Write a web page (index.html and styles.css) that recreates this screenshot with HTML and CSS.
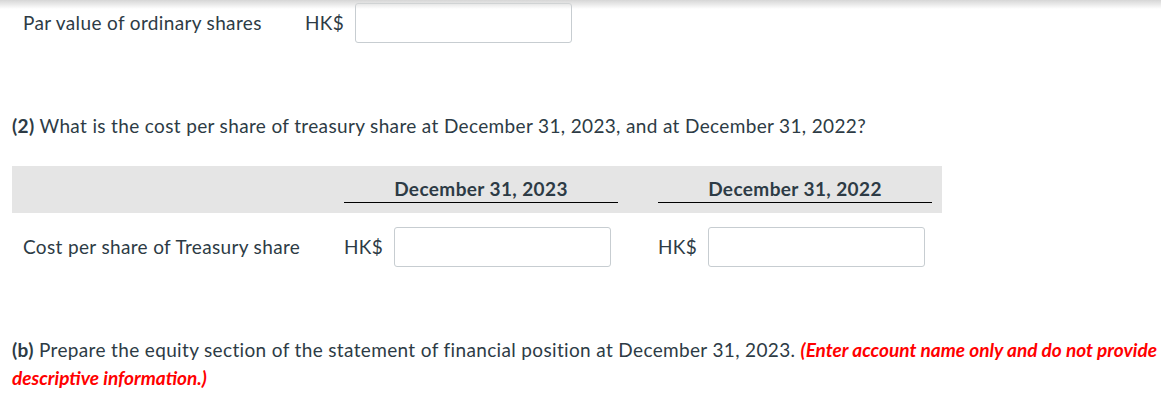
FILE: index.html
```html
<!DOCTYPE html>
<html>
<head>
  <title>Equity - Treasury shares</title>
  <meta charset="utf-8" />
  <link rel="stylesheet" href="styles.css">
</head>
<body>
<div class="shade"></div>
<div class="par-row">
  <span class="par-label">Par value of ordinary shares</span>
  <span class="cur">HK$</span>
  <input type="text" class="amount" />
</div>

<p class="question"><b>(2)</b> What is the cost per share of treasury share at December 31, 2023, and at December 31, 2022?</p>

<div class="cost-table">
  <div class="band">
    <div></div>
    <div class="col-head">December 31, 2023</div>
    <div class="col-head">December 31, 2022</div>
  </div>
  <div class="cost-row">
    <div class="row-label">Cost per share of Treasury share</div>
    <div class="cell"><span class="cur">HK$</span><input type="text" class="amount" /></div>
    <div class="cell"><span class="cur">HK$</span><input type="text" class="amount" /></div>
  </div>
</div>

<p class="question part-b"><b>(b)</b> Prepare the equity section of the statement of financial position at December 31, 2023. <span class="note">(Enter account name only and do not provide<br>descriptive information.)</span></p>
</body>
</html>
```

FILE: styles.css
```css
body {
  margin: 0;
  font-family: Lato, "Open Sans", sans-serif;
  font-size: 19px;
  letter-spacing: 0.35px;
  line-height: 28px;
  color: #2d3b45;
  background: #fff;
  overflow: hidden;
}
.shade {
  position: fixed;
  top: 0;
  left: 0;
  right: 0;
  height: 9px;
  background: linear-gradient(#d6d6d6, rgba(255, 255, 255, 0));
}
.par-row {
  display: flex;
  align-items: center;
  padding: 3px 0 0 23px;
}
.par-label {
  width: 282px;
}
.cur {
  width: 38px;
  margin-right: 12px;
}
.amount {
  width: 217px;
  height: 40px;
  box-sizing: border-box;
  border: 1px solid #c7cdd1;
  border-radius: 3px;
  margin: 0;
  font: inherit;
}
.question {
  margin: 69px 0 0 12px;
}
.cost-table {
  margin: 26px 0 0 12px;
  width: 930px;
}
.band, .cost-row {
  display: grid;
  grid-template-columns: 292px 274px 274px;
  column-gap: 40px;
}
.band {
  background: #e5e5e5;
  height: 47px;
  box-sizing: border-box;
  padding-top: 11px;
}
.col-head {
  font-weight: bold;
  text-align: center;
  border-bottom: 1px solid #000;
  height: 25px;
  line-height: 24px;
  letter-spacing: 0.4px;
}
.cost-row {
  margin-top: 14px;
  align-items: center;
}
.row-label {
  padding-left: 11px;
  white-space: nowrap;
}
.cell {
  display: flex;
  align-items: center;
}
.part-b {
  margin-top: 69px;
  margin-right: 0;
  white-space: nowrap;
}
.note {
  color: #f00;
  font-weight: bold;
  font-style: italic;
  letter-spacing: 0;
}
```
